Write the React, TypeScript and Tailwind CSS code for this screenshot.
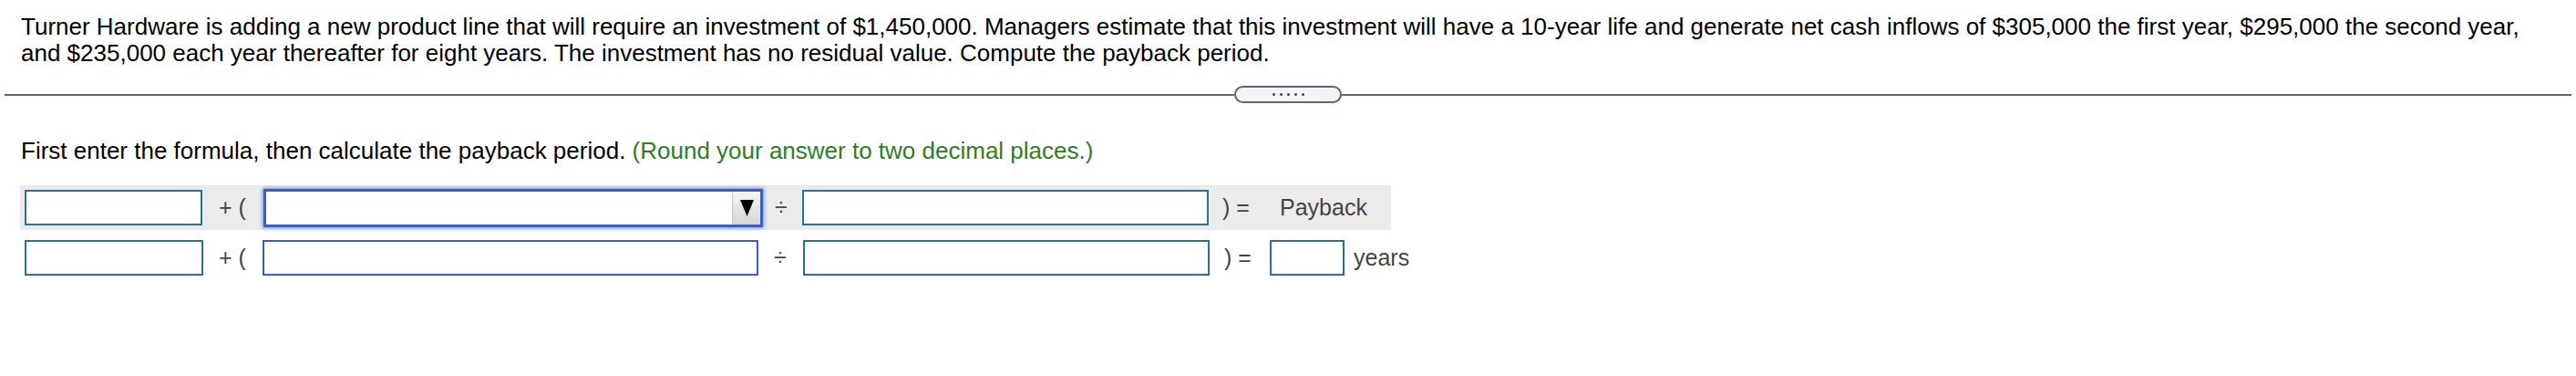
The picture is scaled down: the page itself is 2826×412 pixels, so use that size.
const QUESTION =
  "Turner Hardware is adding a new product line that will require an investment of $1,450,000. Managers estimate that this investment will have a 10-year life and generate net cash inflows of $305,000 the first year, $295,000 the second year, and $235,000 each year thereafter for eight years. The investment has no residual value. Compute the payback period.";

function TextBox({ width }: { width: string }) {
  return <div className={`${width} h-[39px] shrink-0 border-2 border-[#2e7191] bg-white`} />;
}

function Divider() {
  return (
    <div className="mt-[21px] flex h-[19px] items-center px-[5px]">
      <div className="h-[2px] flex-1 bg-[#5d6773]" />
      <div className="flex h-[19px] w-[118px] items-center justify-center gap-[5px] rounded-full border-2 border-[#5d6773] bg-[#f3f4f6]">
        {[0, 1, 2, 3, 4].map((i) => (
          <span key={i} className="h-[3px] w-[3px] rounded-full bg-[#3f4650]" />
        ))}
      </div>
      <div className="h-[2px] flex-1 bg-[#5d6773]" />
    </div>
  );
}

function Dropdown() {
  return (
    <div className="ml-[2px] flex h-[42px] w-[548px] shrink-0 border-[3px] border-[#3d5fc4] bg-white shadow-[0_0_4px_1px_#6f8fe0]">
      <div className="flex-1" />
      <div className="flex w-[31px] items-center justify-center border-l border-[#c9c9c9] bg-gradient-to-b from-[#f6f6f6] to-[#d6d6d6]">
        <svg width="15" height="18" viewBox="0 0 15 18">
          <polygon points="0,0 15,0 7.5,18" fill="#000" />
        </svg>
      </div>
    </div>
  );
}

export default function App() {
  return (
    <div className="h-[412px] w-[2826px] bg-white font-['Liberation_Sans',Arial,sans-serif]">
      <p className="w-[2790px] pl-[23px] pt-[15px] text-[26px] leading-[29px] text-black">{QUESTION}</p>

      <Divider />

      <p className="mt-[38px] pl-[23px] text-[26px] leading-[29px] text-black">
        First enter the formula, then calculate the payback period.{" "}
        <span className="text-[#2f7d1f]">(Round your answer to two decimal places.)</span>
      </p>

      {/* formula row */}
      <div className="ml-[22px] mt-[23px] flex h-[49px] w-[1504px] items-center bg-[#ebebeb] pl-[5px] text-[25px] text-[#444]">
        <TextBox width="w-[195px]" />
        <span className="w-[65px] shrink-0 pl-[18px]">+ (</span>
        <Dropdown />
        <span className="w-[43px] shrink-0 pl-[13px]">÷</span>
        <TextBox width="w-[446px]" />
        <span className="w-[78px] shrink-0 pl-[15px]">) =</span>
        <span>Payback</span>
      </div>

      {/* answer row */}
      <div className="ml-[22px] mt-[11px] flex h-[39px] items-center pl-[5px] text-[25px] text-[#444]">
        <TextBox width="w-[196px]" />
        <span className="w-[65px] shrink-0 pl-[17px]">+ (</span>
        <div className="h-[39px] w-[544px] shrink-0 border-2 border-[#3a5fc1] bg-white" />
        <span className="w-[49px] shrink-0 pl-[17px]">÷</span>
        <TextBox width="w-[446px]" />
        <span className="w-[66px] shrink-0 pl-[16px]">) =</span>
        <TextBox width="w-[82px]" />
        <span className="ml-[10px]">years</span>
      </div>
    </div>
  );
}
